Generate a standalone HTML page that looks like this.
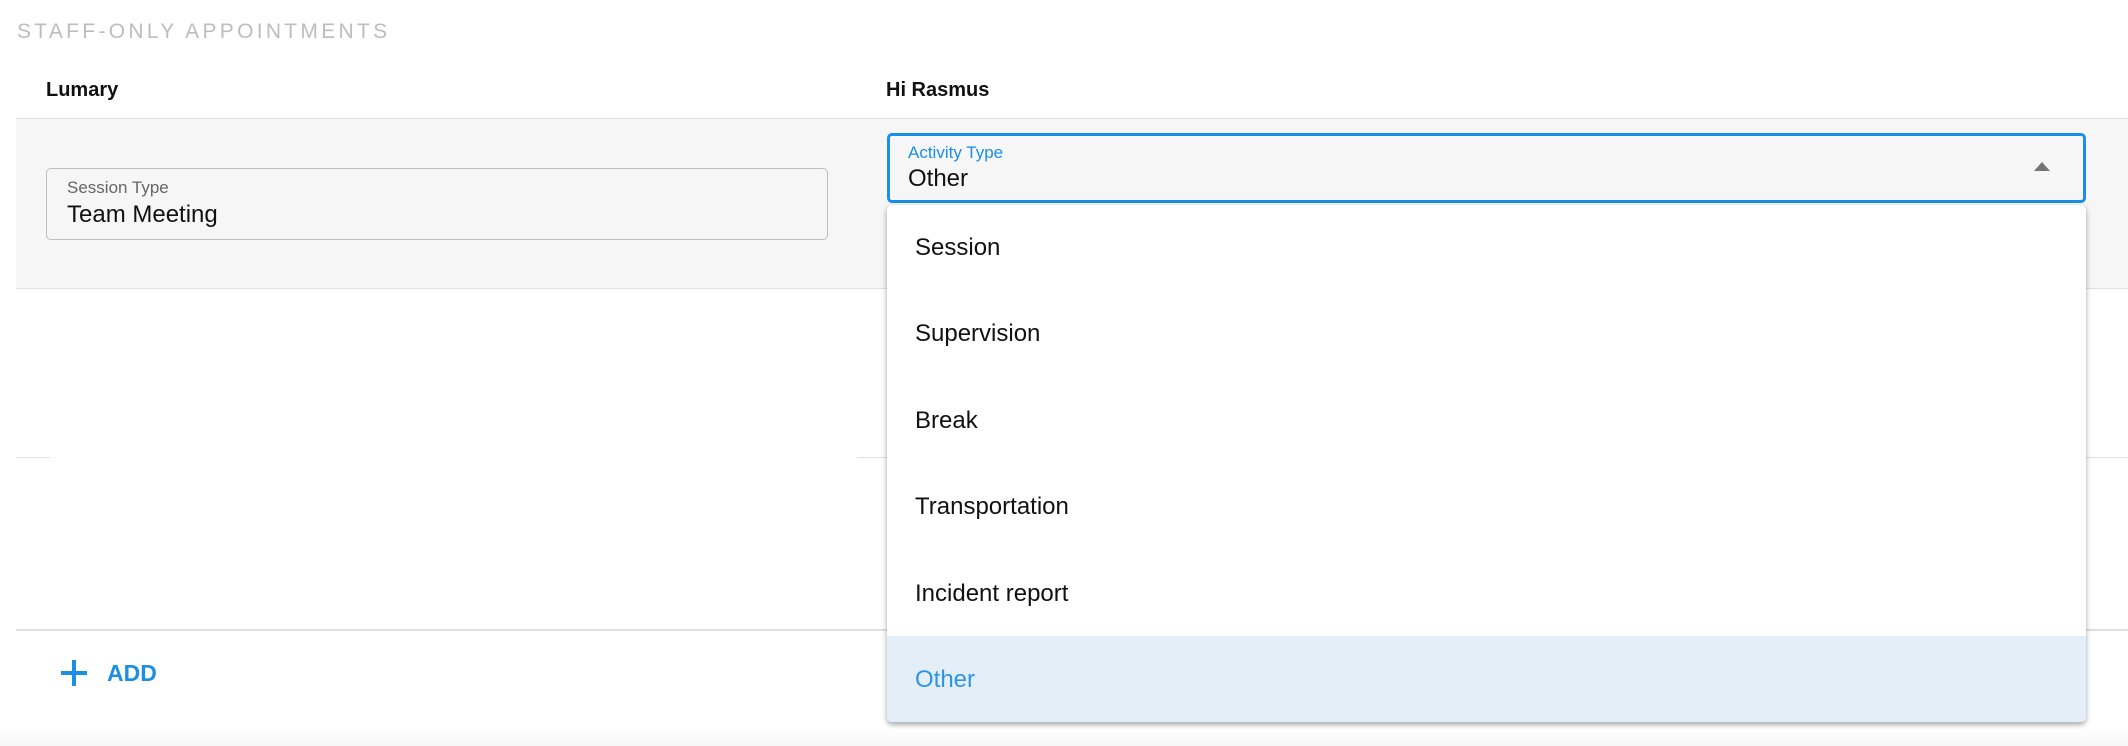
<!DOCTYPE html>
<html><head><meta charset="utf-8"><style>
*{margin:0;padding:0;box-sizing:border-box}
body{width:2128px;height:746px;background:#fff;font-family:"Liberation Sans",sans-serif;position:relative;overflow:hidden;color:rgba(0,0,0,.87)}
.a{position:absolute;white-space:nowrap}
</style></head><body>
<div class="a" style="left:17px;top:20px;font-size:21px;letter-spacing:3.3px;color:#bdbdbd;">STAFF-ONLY APPOINTMENTS</div>
<div class="a" style="left:46px;top:79px;font-size:20px;font-weight:bold;color:#111">Lumary</div>
<div class="a" style="left:886px;top:79px;font-size:20px;font-weight:bold;color:#111">Hi Rasmus</div>
<div class="a" style="left:16px;top:118px;width:2112px;height:1px;background:#e0e0e0"></div>
<div class="a" style="left:16px;top:119px;width:2112px;height:169px;background:#f6f6f6"></div>
<div class="a" style="left:16px;top:288px;width:2112px;height:1px;background:#e0e0e0"></div>
<div class="a" style="left:46px;top:168px;width:782px;height:72px;border:1px solid #bdbdbd;border-radius:5px;"></div>
<div class="a" style="left:67px;top:178px;font-size:17px;color:#666">Session Type</div>
<div class="a" style="left:67px;top:201px;font-size:24px;color:#111">Team Meeting</div>
<div class="a" style="left:887px;top:133px;width:1199px;height:70px;border:3px solid #1a8fe3;border-radius:5px;"></div>
<div class="a" style="left:908px;top:143px;font-size:17px;color:#1a8fe3">Activity Type</div>
<div class="a" style="left:908px;top:165px;font-size:24px;color:#111">Other</div>
<div class="a" style="left:2034px;top:162px;width:0;height:0;border-left:8.5px solid transparent;border-right:8.5px solid transparent;border-bottom:9px solid #757575"></div>
<div class="a" style="left:16px;top:457px;width:34px;height:1px;background:#e0e0e0"></div>
<div class="a" style="left:857px;top:457px;width:1271px;height:1px;background:#e0e0e0"></div>
<div class="a" style="left:16px;top:629px;width:2112px;height:2px;background:#e0e0e0"></div>
<div class="a" style="left:61px;top:671px;width:26px;height:4px;background:#1a8fe3"></div>
<div class="a" style="left:72px;top:660px;width:4px;height:26px;background:#1a8fe3"></div>
<div class="a" style="left:107px;top:660px;font-size:23px;font-weight:bold;color:#1a8fe3">ADD</div>
<div class="a" style="left:0;top:728px;width:2128px;height:18px;background:linear-gradient(#fff,#f7f7f7)"></div>
<div class="a" style="left:887px;top:205px;width:1199px;height:517px;background:#fff;border-radius:5px;box-shadow:0 3px 5px rgba(0,0,0,.25),0 1px 8px rgba(0,0,0,.12);overflow:hidden">
<div style="position:absolute;left:0;top:431px;width:100%;height:86px;background:#e4eef8"></div>
<div class="a" style="left:28px;top:29px;font-size:24px;color:#111">Session</div>
<div class="a" style="left:28px;top:115px;font-size:24px;color:#111">Supervision</div>
<div class="a" style="left:28px;top:202px;font-size:24px;color:#111">Break</div>
<div class="a" style="left:28px;top:288px;font-size:24px;color:#111">Transportation</div>
<div class="a" style="left:28px;top:375px;font-size:24px;color:#111">Incident report</div>
<div class="a" style="left:28px;top:461px;font-size:24px;color:#2d95e6">Other</div>
</div>
</body></html>
